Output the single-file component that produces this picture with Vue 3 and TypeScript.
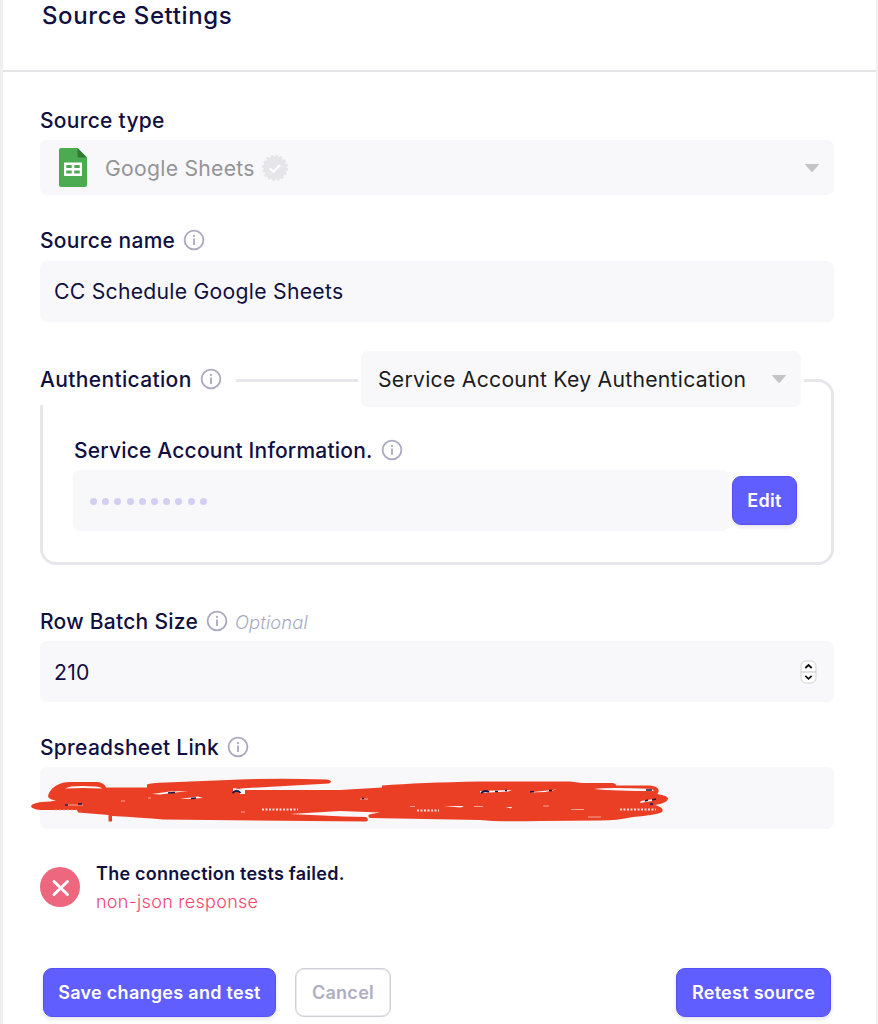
<script setup lang="ts">
import { h, ref } from 'vue'

const sourceName = ref('CC Schedule Google Sheets')
const batchSize = ref('210')
const secretLength = 10

const InfoIcon = () =>
  h('svg', { class: 'info', width: 22, height: 22, viewBox: '0 0 22 22', fill: 'none', stroke: '#a9a8bf', 'stroke-width': 1.8 }, [
    h('circle', { cx: 11, cy: 11, r: 9.4 }),
    h('path', { d: 'M11 9.6V16' }),
    h('path', { d: 'M11 6V7.9' }),
  ])
</script>

<template>
  <main class="panel">
    <header class="head"><h1>Source Settings</h1></header>

    <form class="body" @submit.prevent>
      <section>
        <div class="label"><span>Source type</span></div>
        <div class="field select">
          <svg class="sheets" width="28" height="39" viewBox="0 0 28 39">
            <path d="M2 0H18.5L28 9.5V37a2 2 0 0 1-2 2H2a2 2 0 0 1-2-2V2a2 2 0 0 1 2-2Z" fill="#4caa50" />
            <path d="M18.5 0 28 9.5H20a1.5 1.5 0 0 1-1.5-1.500Z" fill="#2f7b33" />
            <path d="M5 14.500H23V28H5Z" fill="#fff" />
            <path d="M7.300 17H12.700V20H7.300ZM15.300 17H20.700V20H15.300ZM7.300 22.500H12.700V25.500H7.300ZM15.300 22.500H20.700V25.500H15.300Z" fill="#4caa50" />
          </svg>
          <span class="muted">Google Sheets</span>
          <svg class="badge" width="28" height="28" viewBox="0 0 28 28">
            <circle cx="14" cy="14" r="11.500" fill="#e5e5ea" />
            <circle cx="14" cy="14" r="12" fill="none" stroke="#e5e5ea" stroke-width="2.200" stroke-dasharray="2.700 2.010" />
            <path d="M8.800 14.300 12.400 17.800 19 11" fill="none" stroke="#fff" stroke-width="2.200" />
          </svg>
          <svg class="caret" width="16" height="10" viewBox="0 0 16 10"><path d="M1.500 1.500H14.500L8 8.800Z" fill="#c4c4c6" stroke="#c4c4c6" stroke-linejoin="round" /></svg>
        </div>
      </section>

      <section class="g-name">
        <div class="label"><span>Source name</span><InfoIcon /></div>
        <div class="field tall"><span>{{ sourceName }}</span></div>
      </section>

      <section class="auth">
        <div class="auth-head">
          <div class="auth-label"><span>Authentication</span><InfoIcon /></div>
          <div class="auth-pick">
            <div class="field select">
              <span>Service Account Key Authentication</span>
              <svg class="caret" width="16" height="10" viewBox="0 0 16 10"><path d="M1.500 1.500H14.500L8 8.800Z" fill="#c4c4c6" stroke="#c4c4c6" stroke-linejoin="round" /></svg>
            </div>
          </div>
        </div>
        <div class="frame">
          <div class="label"><span>Service Account Information.</span><InfoIcon /></div>
          <div class="secret-row">
            <div class="field tall secret"><i v-for="n in secretLength" :key="n" class="dot"></i></div>
            <button class="btn edit">Edit</button>
          </div>
        </div>
      </section>

      <section class="g-row">
        <div class="label"><span>Row Batch Size</span><InfoIcon /><em class="optional">Optional</em></div>
        <div class="field tall">
          <span>{{ batchSize }}</span>
          <svg class="stepper" width="18" height="24" viewBox="0 0 18 24" fill="none">
            <rect x="1" y="1" width="15" height="22" rx="5" fill="#fff" stroke="#d2d2d2" />
            <path d="M1 12H16" stroke="#c4c4c4" />
            <path d="M5.300 8 8.500 5 11.700 8M5.300 15.800 8.500 18.800 11.700 15.800" stroke="#111" stroke-width="1.800" />
          </svg>
        </div>
      </section>

      <section class="g-link">
        <div class="label"><span>Spreadsheet Link</span><InfoIcon /></div>
        <div class="field tall link">
          <svg class="scribble" width="650" height="60" viewBox="30 770 650 60">
            <g fill="#eb3f25">
              <path d="M49 793C53 786 60 782 70 782H96Q104 782 106 787.500H147V784.500Q150 783 166 782.500L240 779.500Q280 778 327 779.500Q334 781 329 783.500L240 788.500L242 790H340L382 787.500V785.500Q420 782.500 480 781.500H570L582 783H613Q617 784 616 785.500H650Q661 787 658 793L657 794Q669 796 668 799Q667 803 655 805Q665 808 662 812Q657 815 633 817Q617 820.500 600 820.500L540 821Q500 822 480 820L370 818Q366 815 371 814L380 812.500L340 811L290 814L344 816.500L366 817Q370 820 366 821.500L163 819.500Q142 817.500 112 816V821.500H108.500V815L78 812.500L77 810L41 810Q31 809 31 806Q33 802 50 801.500L56 800.500Q48 799 48 796Z" />
            </g>
            <g fill="#f8f8fa">
              <path d="M65 788.500Q71 785 95 786.500Q101 787 102 788.500Q83 787.500 65 788.500Z" />
              <path d="M594 789Q607 787 652 789L654 791Q615 791 594 789Z" />
              <path d="M152 794 170 791.500 188 791 160 794.500ZM180 799 198 796.500 203 798 186 799ZM480 791 512 790 508 791.500 480 793ZM528 792.500 557 789.500 545 792Z" />
              <path d="M233 788 245 790 245 794 240 794Q238 790 233 792ZM444 806 464 806 461 807.500ZM506 807 512 807 511 808.500ZM641 801 654 799 652 801 640 803Z" />
            </g>
            <g fill="none" stroke="#f9ded9">
              <path d="M262 809.500H298M417 810.500H439M620 809.500H656" stroke-width="2" stroke-dasharray="2 1.500" />
              <path d="M55 810.500H78" stroke-width="1.500" stroke-dasharray="2 2" />
              <path d="M121 801H125M65 805H83M148 798H151M410 806.500H415M474 806.500H483M543 806H549M571 809.500H584M588 817H601M241 812H245M360 799H368" stroke-opacity=".65" />
            </g>
            <g fill="none" stroke="#191642" stroke-width="1.400">
              <path d="M232.500 793Q237 788.500 240.500 793" stroke-width="1.800" />
              <path d="M481 793Q485 789.500 489 792" stroke-width="2" />
              <path d="M495 791.500H498M505 790.500H507M530 792 534 791.500M549 790.500H552M168 793 175 792.500M191 798.500 196 798M65 805H68M78 804H82M362 798.500H364M646 790H652M645 801 648 800M652 800 656 799M650 804H653" />
            </g>
          </svg>
        </div>
      </section>

      <section class="result">
        <svg width="40" height="40" viewBox="0 0 40 40"><circle cx="20" cy="20" r="20" fill="#ed687f" /><path d="M14 14.500 27.500 27.500M27.500 14.500 14 27.500" stroke="#fff" stroke-width="3" stroke-linecap="round" /></svg>
        <div class="message">
          <strong>The connection tests failed.</strong>
          <span class="reason">non-json response</span>
        </div>
      </section>

      <footer class="actions">
        <button class="btn save">Save changes and test</button>
        <button class="btn cancel">Cancel</button>
        <button class="btn retest">Retest source</button>
      </footer>
    </form>
  </main>
</template>

<style>
body { background: #fff; overflow: hidden; }
</style>

<style scoped>
* { box-sizing: border-box; }
.panel { width: 878px; height: 1024px; overflow: hidden; border-left: 3px solid #f1efed; border-right: 2px solid #f0f0f1; background: #fff; font-family: Inter, sans-serif; color: #100f42; font-size: 21.200px; font-weight: 380; letter-spacing: .26px; }
.head { height: 72px; border-bottom: 2px solid #e4e4e7; padding-left: 39px; }
h1 { margin: 0; line-height: 32px; font-size: 24px; font-weight: 460; letter-spacing: .6px; }
.body { padding: 28px 42px 0 37px; }
.label { display: flex; align-items: center; height: 40px; font-size: 21px; font-weight: 460; white-space: nowrap; letter-spacing: .27px; }
.info { flex: none; margin-left: 8px; }
.field { display: flex; align-items: center; width: 100%; background: #f8f8fa; border-radius: 7px; white-space: nowrap; }
.tall { height: 61px; padding: 0 14px; }
.select { height: 55px; padding: 0 14px 0 19px; }
.muted { color: #949496; margin-left: 18px; }
.badge { margin-left: 6px; }
.caret { margin-left: auto; }
.g-name { margin-top: 25px; }
.g-name .field { margin-top: 1px; padding-bottom: 1px; }
.auth { margin-top: 29px; }
.auth-head { position: relative; display: flex; justify-content: space-between; height: 56px; padding-right: 30px; }
.auth-label { display: flex; align-items: center; width: 196px; height: 54px; padding-top: 2px; background: #fff; font-size: 21px; font-weight: 460; letter-spacing: .35px; }
.auth-pick { width: 446px; padding: 0 3px; background: #fff; }
.auth-pick .select { height: 56px; padding: 0 14px 0 17px; color: #1c1c20; }
.frame { height: 186px; margin-top: -28px; border: 3px solid #e6e6eb; border-radius: 16px; padding: 48px 33px 0 30px; }
.frame .label { padding-left: 1px; letter-spacing: .2px; }
.secret-row { display: flex; align-items: center; gap: 3px; }
.secret { width: 656px; padding-left: 17px; gap: 5.200px; padding-top: 2px; }
.dot { width: 7px; height: 7px; border-radius: 50%; background: #d2cff2; }
.g-row { margin-top: 36px; }
.optional { margin-left: 7px; padding-top: 2px; color: #aaa9bf; font-size: 18.400px; font-weight: 360; letter-spacing: .1px; }
.stepper { margin-left: auto; margin-right: 2px; }
.g-link { margin-top: 25px; }
.link { position: relative; height: 62px; }
.scribble { position: absolute; left: -10px; top: 3px; }
.result { display: flex; align-items: center; gap: 16px; height: 56px; margin-top: 30px; }
.message { display: flex; flex-direction: column; padding-top: 1px; font-size: 18px; line-height: 28px; white-space: nowrap; }
strong { font-weight: 560; letter-spacing: .25px; }
.reason { color: #ef476f; font-weight: 350; letter-spacing: .28px; }
.actions { display: flex; padding: 0 3px; margin-top: 53px; }
.btn { height: 49px; padding: 0; border: 1px solid #5550f5; border-radius: 9px; background: #615eff; color: #fff; font: 570 18px Inter, sans-serif; letter-spacing: .28px; white-space: nowrap; box-shadow: 0 2px 4px #1a194d1f; }
.edit { width: 65px; }
.save { width: 233px; }
.cancel { width: 96px; margin-left: 19px; background: #fff; border: 1.500px solid #d0cfda; box-shadow: inset 0 0 0 .5px #d5d4de; color: #afaec1; }
.retest { width: 155px; margin-left: auto; }
</style>
